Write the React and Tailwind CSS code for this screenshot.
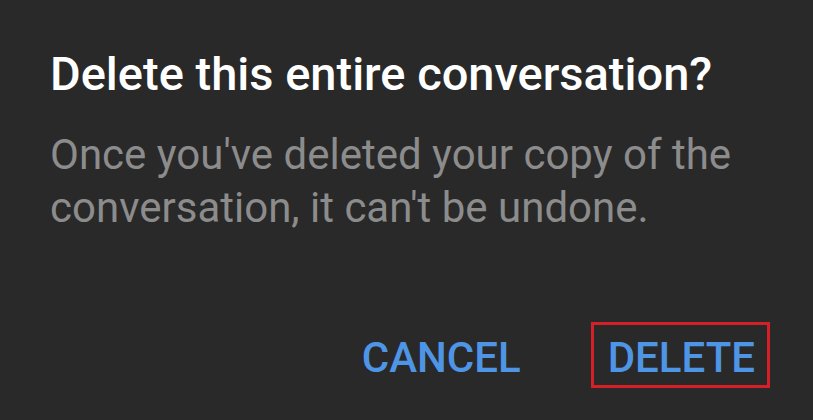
export default function App() {
  return (
    <div
      className="w-[813px] h-[420px] bg-[#292929] overflow-hidden flex flex-col"
      style={{ fontFamily: "Roboto, 'Liberation Sans', sans-serif" }}
    >
      <div className="pl-[50px] pt-[47px]">
        <h1 className="text-[47px] leading-[54px] font-medium text-white m-0">
          Delete this entire conversation?
        </h1>
        <p className="mt-[27px] text-[42px] leading-[53px] text-[#8c8c8c] font-normal">
          Once you've deleted your copy of the
          <br />
          conversation, it can't be undone.
        </p>
      </div>
      <div className="mt-[88px] flex justify-end items-start pr-[43px] gap-[67px]">
        <button className="border-[3px] border-transparent pt-[8px] pb-[3px] text-[42px] leading-[49px] font-medium text-[#4f95e6]">
          CANCEL
        </button>
        <button className="border-[3px] border-[#d62028] pl-[14px] pr-[12px] pt-[8px] pb-[3px] text-[42px] leading-[49px] font-medium text-[#4f95e6]">
          DELETE
        </button>
      </div>
    </div>
  );
}
